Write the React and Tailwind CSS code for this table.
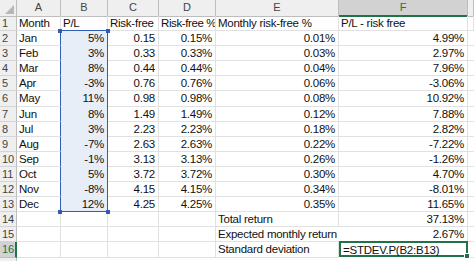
import React from 'react'

const COLS = ['A', 'B', 'C', 'D', 'E', 'F', '']

const DATA = [
  ['Jan', '5%', '0.15', '0.15%', '0.01%', '4.99%'],
  ['Feb', '3%', '0.33', '0.33%', '0.03%', '2.97%'],
  ['Mar', '8%', '0.44', '0.44%', '0.04%', '7.96%'],
  ['Apr', '-3%', '0.76', '0.76%', '0.06%', '-3.06%'],
  ['May', '11%', '0.98', '0.98%', '0.08%', '10.92%'],
  ['Jun', '8%', '1.49', '1.49%', '0.12%', '7.88%'],
  ['Jul', '3%', '2.23', '2.23%', '0.18%', '2.82%'],
  ['Aug', '-7%', '2.63', '2.63%', '0.22%', '-7.22%'],
  ['Sep', '-1%', '3.13', '3.13%', '0.26%', '-1.26%'],
  ['Oct', '5%', '3.72', '3.72%', '0.30%', '4.70%'],
  ['Nov', '-8%', '4.15', '4.15%', '0.34%', '-8.01%'],
  ['Dec', '12%', '4.25', '4.25%', '0.35%', '11.65%'],
]

const grid = 'grid grid-cols-[17px_44px_47px_51px_57px_123px_129px_1fr]'
const cell = 'h-[15.1px] border-r border-b border-[#e1e1e1] px-[3px] leading-[15px] whitespace-nowrap'
const head = 'h-[15.1px] border-r border-b border-[#e1e1e1] pl-[2px] leading-[15px] whitespace-nowrap overflow-hidden'

function RowHead({ n, active }) {
  return (
    <div
      className={
        'h-[15.1px] leading-[15px] pl-[2px] text-[11px] tracking-normal border-b ' +
        (active
          ? 'bg-[#d2d2d2] text-[#217346] border-[#bdbdbd] border-r-2 border-r-[#217346]'
          : 'bg-[#efefef] text-[#444] border-[#d4d4d4] border-r border-r-[#bdbdbd]')
      }
    >
      {n}
    </div>
  )
}

function Handle({ pos }) {
  return <div className={'absolute w-[4px] h-[4px] bg-[#2f5eb8] ' + pos} />
}

export default function App() {
  return (
    <div
      className="w-[474px] h-[261px] overflow-hidden bg-white text-[#111] text-[11.5px] tracking-[-0.25px]"
      style={{ fontFamily: '"Liberation Sans", Arial, sans-serif' }}
    >
      {/* column headers */}
      <div className={grid + ' h-[16px] bg-[#efefef] text-[#444] text-[11px] tracking-normal'}>
        <div className="relative border-r border-b border-[#bdbdbd]">
          <div className="absolute right-[2px] bottom-[2px] w-0 h-0 border-l-[9px] border-l-transparent border-b-[9px] border-b-[#b7b7b7]" />
        </div>
        {COLS.map((c, i) =>
          c === 'F' ? (
            <div key={i} className="bg-[#d2d2d2] text-[#217346] text-center leading-[15px] border-r border-[#bdbdbd] border-b-2 border-b-[#217346]">
              {c}
            </div>
          ) : (
            <div key={i} className="text-center leading-[15px] border-r border-b border-[#bdbdbd]">
              {c}
            </div>
          )
        )}
      </div>

      {/* row 1 */}
      <div className={grid}>
        <RowHead n={1} />
        <div className={head}>Month</div>
        <div className={head + ' border-b-[#2f5eb8]'}>P/L</div>
        <div className={head}>Risk-free</div>
        <div className={head + ' tracking-[-0.4px]'}>Risk-free %</div>
        <div className={head}>Monthly risk-free %</div>
        <div className={head}>P/L - risk free</div>
        <div className={head} />
      </div>

      {DATA.map((r, i) => (
        <div key={i} className={grid}>
          <RowHead n={i + 2} />
          <div className={cell + ' pl-[2px] border-r-[#2f5eb8]'}>{r[0]}</div>
          <div
            className={
              'relative h-[15.1px] leading-[15px] px-[3px] text-right bg-[#e8eef8] border-r border-[#2f5eb8] ' +
              (i === 11 ? 'border-b' : '')
            }
          >
            {r[1]}
            {i === 0 && <Handle pos="-top-[2px] -left-[3px]" />}
            {i === 0 && <Handle pos="-top-[2px] -right-[3px]" />}
            {i === 11 && <Handle pos="-bottom-[3px] -left-[3px]" />}
            {i === 11 && <Handle pos="-bottom-[3px] -right-[3px]" />}
          </div>
          <div className={cell + ' text-right'}>{r[2]}</div>
          <div className={cell + ' text-right'}>{r[3]}</div>
          <div className={cell + ' text-right'}>{r[4]}</div>
          <div className={cell + ' text-right'}>{r[5]}</div>
          <div className={cell} />
        </div>
      ))}

      {/* row 14 */}
      <div className={grid}>
        <RowHead n={14} />
        <div className={cell} />
        <div className={cell} />
        <div className={cell} />
        <div className={cell} />
        <div className={cell + ' pl-[2px]'}>Total return</div>
        <div className={cell + ' text-right'}>37.13%</div>
        <div className={cell} />
      </div>

      {/* row 15 */}
      <div className={grid}>
        <RowHead n={15} />
        <div className={cell} />
        <div className={cell} />
        <div className={cell} />
        <div className={cell} />
        <div className={cell + ' pl-[2px] border-r-0 overflow-visible relative z-10'}>Expected monthly return</div>
        <div className={cell + ' text-right'}>2.67%</div>
        <div className={cell} />
      </div>

      {/* row 16 */}
      <div className={grid}>
        <RowHead n={16} active />
        <div className={cell} />
        <div className={cell} />
        <div className={cell} />
        <div className={cell} />
        <div className={cell + ' pl-[2px]'}>Standard deviation</div>
        <div className="relative h-[16px] -mt-[1px] leading-[15px] px-[2px] border-2 border-[#217346] whitespace-nowrap">
          =STDEV.P(B2:B13)
          <div className="absolute -right-[4px] -bottom-[4px] w-[6px] h-[6px] bg-[#217346] border border-white" />
        </div>
        <div className={cell} />
      </div>

      {/* row 17 */}
      <div className={grid}>
        <div className="h-[15px] bg-[#efefef] border-r border-[#bdbdbd]" />
      </div>
    </div>
  )
}
